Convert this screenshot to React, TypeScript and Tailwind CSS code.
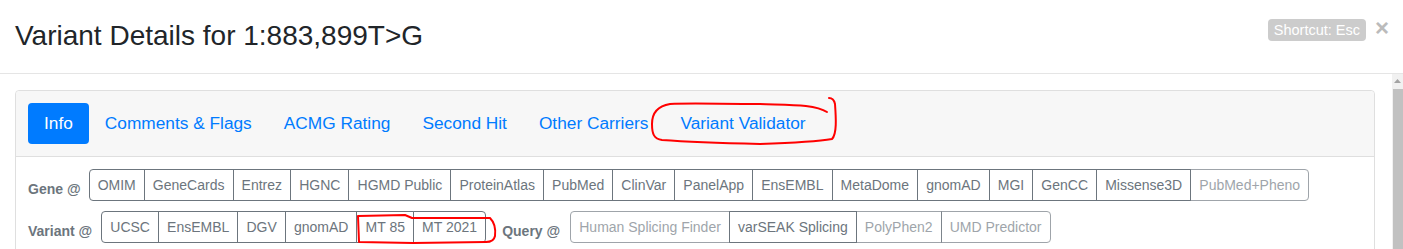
import React from 'react';

const tabs = ['Info', 'Comments & Flags', 'ACMG Rating', 'Second Hit', 'Other Carriers', 'Variant Validator'];

const geneLinks = [
  'OMIM', 'GeneCards', 'Entrez', 'HGNC', 'HGMD Public', 'ProteinAtlas', 'PubMed', 'ClinVar',
  'PanelApp', 'EnsEMBL', 'MetaDome', 'gnomAD', 'MGI', 'GenCC', 'Missense3D',
];

const variantLinks = ['UCSC', 'EnsEMBL', 'DGV', 'gnomAD', 'MT 85', 'MT 2021'];

type Link = { label: string; disabled?: boolean };

const queryLinks: Link[] = [
  { label: 'Human Splicing Finder', disabled: true },
  { label: 'varSEAK Splicing' },
  { label: 'PolyPhen2', disabled: true },
  { label: 'UMD Predictor', disabled: true },
];

function ButtonGroup({ links }: { links: Link[] }) {
  return (
    <div className="flex">
      {links.map((l, i) => {
        let cls = 'border border-[#6c757d] text-[#6c757d] text-[14px] leading-[20px] px-[8.07px] py-[5px] bg-white whitespace-nowrap';
        if (i > 0) cls += ' -ml-px';
        if (i === 0) cls += ' rounded-l-[4px]';
        if (i === links.length - 1) cls += ' rounded-r-[4px]';
        if (l.disabled) cls += ' opacity-65';
        return (
          <span key={l.label + i} className={cls}>
            {l.label}
          </span>
        );
      })}
    </div>
  );
}

function Label({ children, className = '' }: { children: React.ReactNode; className?: string }) {
  return (
    <span className={`text-[14px] leading-[21px] font-bold text-[#6c757d] pb-px whitespace-nowrap ${className}`}>
      {children}
    </span>
  );
}

export default function App() {
  return (
    <div className="relative h-[249px] w-[1403px] overflow-hidden bg-white text-[#212529]" style={{ fontFamily: '"Liberation Sans", Arial, sans-serif' }}>
      {/* modal header */}
      <div className="flex justify-between h-[74px] border-b border-[#e5e5e5] pl-[15px] pr-[14px]">
        <h4 className="self-center text-[28px] leading-[36px] font-normal -mt-[2px]">Variant Details for 1:883,899T&gt;G</h4>
        <div className="flex items-start mt-[19px] gap-[9px]">
          <span className="bg-[#cccccc] text-white text-[14.5px] leading-[16px] px-[6px] py-[3px] rounded-[4px]">Shortcut: Esc</span>
          <span className="text-[#bbbbbb] text-[24px] leading-[20px] font-bold -mt-[1px]">×</span>
        </div>
      </div>

      <div className="flex">
        <div className="flex-1 pt-[16px] pl-[15px] pr-[17px]">
          {/* card */}
          <div className="border border-[#dfdfdf] rounded-[4px] bg-white">
            <div className="bg-[#f7f7f7] border-b border-[#dfdfdf] rounded-t-[4px] p-[12px] flex">
              {tabs.map((t, i) => (
                <span
                  key={t}
                  className={
                    i === 0
                      ? 'bg-[#007bff] text-white rounded-[4px] px-4 py-2 text-[17.3px] leading-[25px]'
                      : 'text-[#007bff] px-4 py-2 text-[17.3px] leading-[25px]'
                  }
                >
                  {t}
                </span>
              ))}
            </div>
            <div className="pt-[12px] px-[12px] pb-4">
              <div className="flex items-end gap-[8px]">
                <Label>Gene @</Label>
                <ButtonGroup links={[...geneLinks.map((g) => ({ label: g })), { label: 'PubMed+Pheno', disabled: true }]} />
              </div>
              <div className="flex items-end mt-[10px]">
                <Label className="mr-[9px]">Variant @</Label>
                <ButtonGroup links={variantLinks.map((v) => ({ label: v }))} />
                <Label className="ml-[16px] mr-[10px]">Query @</Label>
                <ButtonGroup links={queryLinks} />
              </div>
            </div>
          </div>
        </div>

        {/* scrollbar */}
        <div className="w-[11px] h-[180px] bg-[#f1f1f1] flex flex-col items-center">
          <svg width="11" height="15" viewBox="0 0 11 15">
            <polygon points="2,9 9,9 5.5,5" fill="#a3a3a3" />
          </svg>
          <div className="w-[10px] ml-px flex-1 bg-[#c1c1c1]" />
        </div>
      </div>

      {/* red annotations drawn over the screenshot */}
      <svg className="absolute left-0 top-0 pointer-events-none" width="1403" height="249" viewBox="0 0 1403 249">
        <path
          d="M827 112 C 815 104, 790 105, 760 104 C 720 104, 690 103, 670 104 C 658 106, 652 112, 652 124 C 652 134, 654 139, 662 140 C 690 142, 720 143, 760 144 C 790 143, 815 142, 832 139 C 837 134, 836 118, 835 104 C 834 99, 832 98, 829 98"
          fill="none"
          stroke="#ff0000"
          strokeWidth="2"
          strokeLinecap="round"
          strokeLinejoin="round"
        />
        <path
          d="M358 216 L 405 215 L 412 218 L 490 218 C 494 222, 496 228, 495 236 C 494 241, 490 242, 486 242 L 413 243 L 359 242 Z"
          fill="none"
          stroke="#ff0000"
          strokeWidth="2"
          strokeLinejoin="round"
        />
      </svg>
    </div>
  );
}
